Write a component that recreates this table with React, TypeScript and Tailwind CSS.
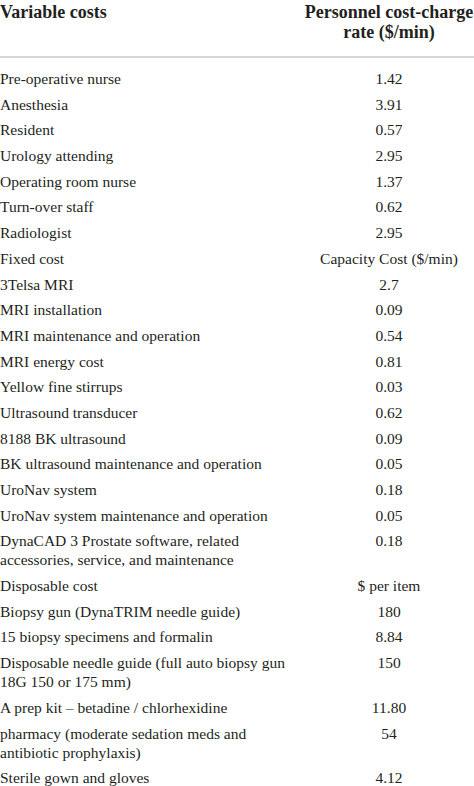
const rows: { label: string[]; value: string }[] = [
  { label: ["Pre-operative nurse"], value: "1.42" },
  { label: ["Anesthesia"], value: "3.91" },
  { label: ["Resident"], value: "0.57" },
  { label: ["Urology attending"], value: "2.95" },
  { label: ["Operating room nurse"], value: "1.37" },
  { label: ["Turn-over staff"], value: "0.62" },
  { label: ["Radiologist"], value: "2.95" },
  { label: ["Fixed cost"], value: "Capacity Cost ($/min)" },
  { label: ["3Telsa MRI"], value: "2.7" },
  { label: ["MRI installation"], value: "0.09" },
  { label: ["MRI maintenance and operation"], value: "0.54" },
  { label: ["MRI energy cost"], value: "0.81" },
  { label: ["Yellow fine stirrups"], value: "0.03" },
  { label: ["Ultrasound transducer"], value: "0.62" },
  { label: ["8188 BK ultrasound"], value: "0.09" },
  { label: ["BK ultrasound maintenance and operation"], value: "0.05" },
  { label: ["UroNav system"], value: "0.18" },
  { label: ["UroNav system maintenance and operation"], value: "0.05" },
  {
    label: [
      "DynaCAD 3 Prostate software, related",
      "accessories, service, and maintenance",
    ],
    value: "0.18",
  },
  { label: ["Disposable cost"], value: "$ per item" },
  { label: ["Biopsy gun (DynaTRIM needle guide)"], value: "180" },
  { label: ["15 biopsy specimens and formalin"], value: "8.84" },
  {
    label: ["Disposable needle guide (full auto biopsy gun", "18G 150 or 175 mm)"],
    value: "150",
  },
  { label: ["A prep kit – betadine / chlorhexidine"], value: "11.80" },
  {
    label: ["pharmacy (moderate sedation meds and", "antibiotic prophylaxis)"],
    value: "54",
  },
  { label: ["Sterile gown and gloves"], value: "4.12" },
];

export default function App() {
  return (
    <div
      className="w-[474px] h-[786px] overflow-hidden bg-white text-[#231f20]"
      style={{ fontFamily: '"Liberation Serif", "Times New Roman", serif' }}
    >
      <div className="w-[476px]">
        {/* Header */}
        <div className="grid grid-cols-[302px_174px] pt-[2px] pb-[14px] text-[18px] leading-[20px] font-bold">
          <div>Variable costs</div>
          <div className="text-center whitespace-nowrap">
            Personnel cost-charge
            <br />
            rate ($/min)
          </div>
        </div>

        <div className="h-[2px] bg-[#d6d6d6]" />

        {/* Body */}
        <div className="pt-[7.7px] text-[15.5px] leading-[19px]">
          {rows.map((row, i) => (
            <div
              key={i}
              className="grid grid-cols-[302px_174px] py-[3.35px] items-start"
            >
              <div className="whitespace-nowrap">
                {row.label.map((line, j) => (
                  <div key={j}>{line}</div>
                ))}
              </div>
              <div className="text-center whitespace-nowrap">{row.value}</div>
            </div>
          ))}
        </div>
      </div>
    </div>
  );
}
